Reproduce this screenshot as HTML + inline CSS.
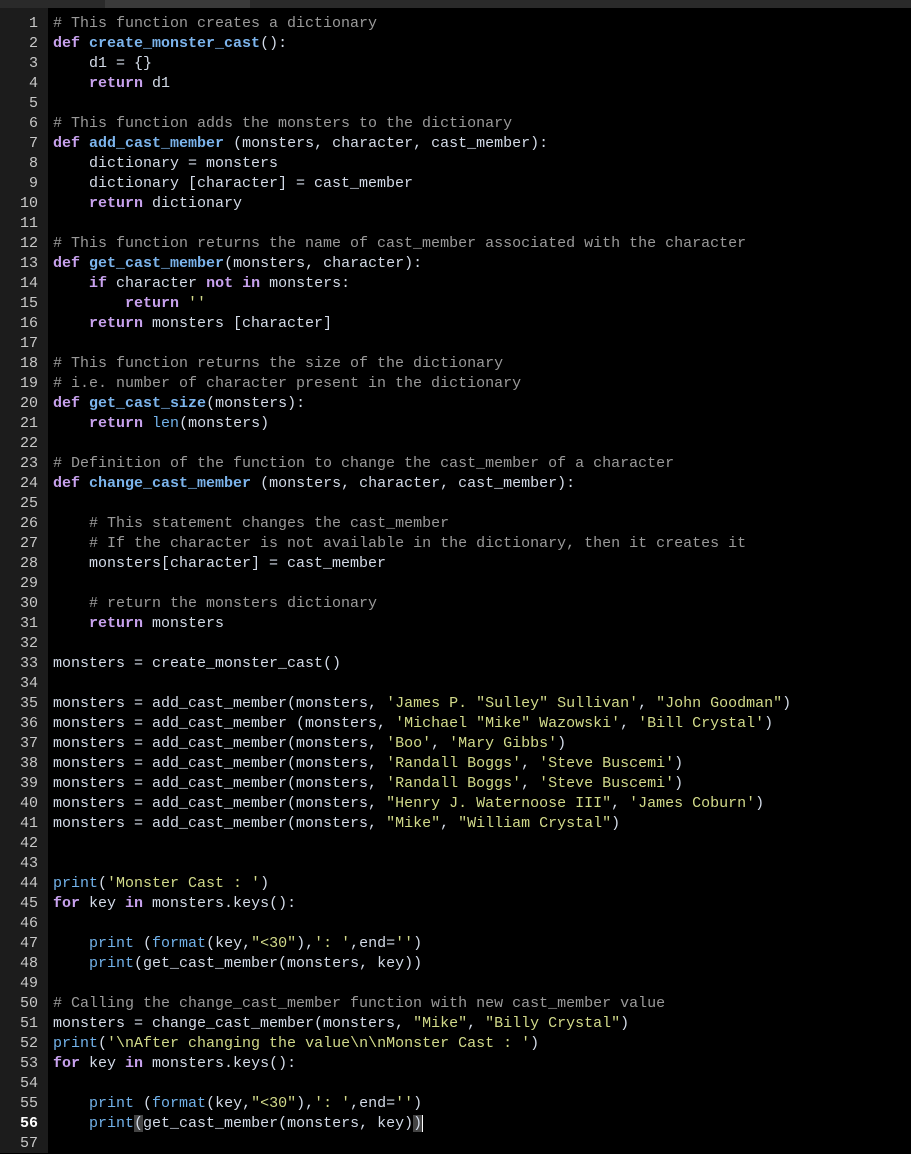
<!DOCTYPE html>
<html><head><meta charset="utf-8"><style>
body{margin:0;width:911px;height:1153px;background:#000;overflow:hidden;position:relative;font-family:"Liberation Mono",monospace;font-size:15px;}
#top{position:absolute;left:0;top:0;width:911px;height:8px;background:#2a2a2a}
#tab{position:absolute;left:105px;top:0;width:145px;height:8px;background:#3a3a3a}
#gut{position:absolute;left:0;top:8px;width:48px;height:1145px;background:#1c1c1c}
#nums{position:absolute;left:0;top:14px;width:38px;text-align:right;color:#c8c8c8;line-height:20px;white-space:pre}
#code{position:absolute;left:53px;top:14px;color:#d3dbe8;line-height:20px;white-space:pre}
.c{color:#9a9a9a}.k{color:#c8a2ee;font-weight:bold}.f{color:#7cb4ec;font-weight:bold}.s{color:#d2da8a}.b{color:#72b2ea}
.cur{background:#444;}
</style></head><body>
<div id="top"></div><div id="tab"></div><div id="gut"></div>
<div id="nums">1
2
3
4
5
6
7
8
9
10
11
12
13
14
15
16
17
18
19
20
21
22
23
24
25
26
27
28
29
30
31
32
33
34
35
36
37
38
39
40
41
42
43
44
45
46
47
48
49
50
51
52
53
54
55
<b style="color:#fff">56</b>
57</div>
<div id="code"><span class="c"># This function creates a dictionary</span>
<span class="k">def</span> <span class="f">create_monster_cast</span>():
    d1 = {}
    <span class="k">return</span> d1

<span class="c"># This function adds the monsters to the dictionary</span>
<span class="k">def</span> <span class="f">add_cast_member</span> (monsters, character, cast_member):
    dictionary = monsters
    dictionary [character] = cast_member
    <span class="k">return</span> dictionary

<span class="c"># This function returns the name of cast_member associated with the character</span>
<span class="k">def</span> <span class="f">get_cast_member</span>(monsters, character):
    <span class="k">if</span> character <span class="k">not</span> <span class="k">in</span> monsters:
        <span class="k">return</span> <span class="s">''</span>
    <span class="k">return</span> monsters [character]

<span class="c"># This function returns the size of the dictionary</span>
<span class="c"># i.e. number of character present in the dictionary</span>
<span class="k">def</span> <span class="f">get_cast_size</span>(monsters):
    <span class="k">return</span> <span class="b">len</span>(monsters)

<span class="c"># Definition of the function to change the cast_member of a character</span>
<span class="k">def</span> <span class="f">change_cast_member</span> (monsters, character, cast_member):

    <span class="c"># This statement changes the cast_member</span>
    <span class="c"># If the character is not available in the dictionary, then it creates it</span>
    monsters[character] = cast_member

    <span class="c"># return the monsters dictionary</span>
    <span class="k">return</span> monsters

monsters = create_monster_cast()

monsters = add_cast_member(monsters, <span class="s">'James P. "Sulley" Sullivan'</span>, <span class="s">"John Goodman"</span>)
monsters = add_cast_member (monsters, <span class="s">'Michael "Mike" Wazowski'</span>, <span class="s">'Bill Crystal'</span>)
monsters = add_cast_member(monsters, <span class="s">'Boo'</span>, <span class="s">'Mary Gibbs'</span>)
monsters = add_cast_member(monsters, <span class="s">'Randall Boggs'</span>, <span class="s">'Steve Buscemi'</span>)
monsters = add_cast_member(monsters, <span class="s">'Randall Boggs'</span>, <span class="s">'Steve Buscemi'</span>)
monsters = add_cast_member(monsters, <span class="s">"Henry J. Waternoose III"</span>, <span class="s">'James Coburn'</span>)
monsters = add_cast_member(monsters, <span class="s">"Mike"</span>, <span class="s">"William Crystal"</span>)


<span class="b">print</span>(<span class="s">'Monster Cast : '</span>)
<span class="k">for</span> key <span class="k">in</span> monsters.keys():

    <span class="b">print</span> (<span class="b">format</span>(key,<span class="s">"&lt;30"</span>),<span class="s">': '</span>,end=<span class="s">''</span>)
    <span class="b">print</span>(get_cast_member(monsters, key))

<span class="c"># Calling the change_cast_member function with new cast_member value</span>
monsters = change_cast_member(monsters, <span class="s">"Mike"</span>, <span class="s">"Billy Crystal"</span>)
<span class="b">print</span>(<span class="s">'\nAfter changing the value\n\nMonster Cast : '</span>)
<span class="k">for</span> key <span class="k">in</span> monsters.keys():

    <span class="b">print</span> (<span class="b">format</span>(key,<span class="s">"&lt;30"</span>),<span class="s">': '</span>,end=<span class="s">''</span>)
    <span class="b">print</span><span class="cur">(</span>get_cast_member(monsters, key)<span class="cur">)</span><span style="border-left:1px solid #fff"></span>
</div>
</body></html>
